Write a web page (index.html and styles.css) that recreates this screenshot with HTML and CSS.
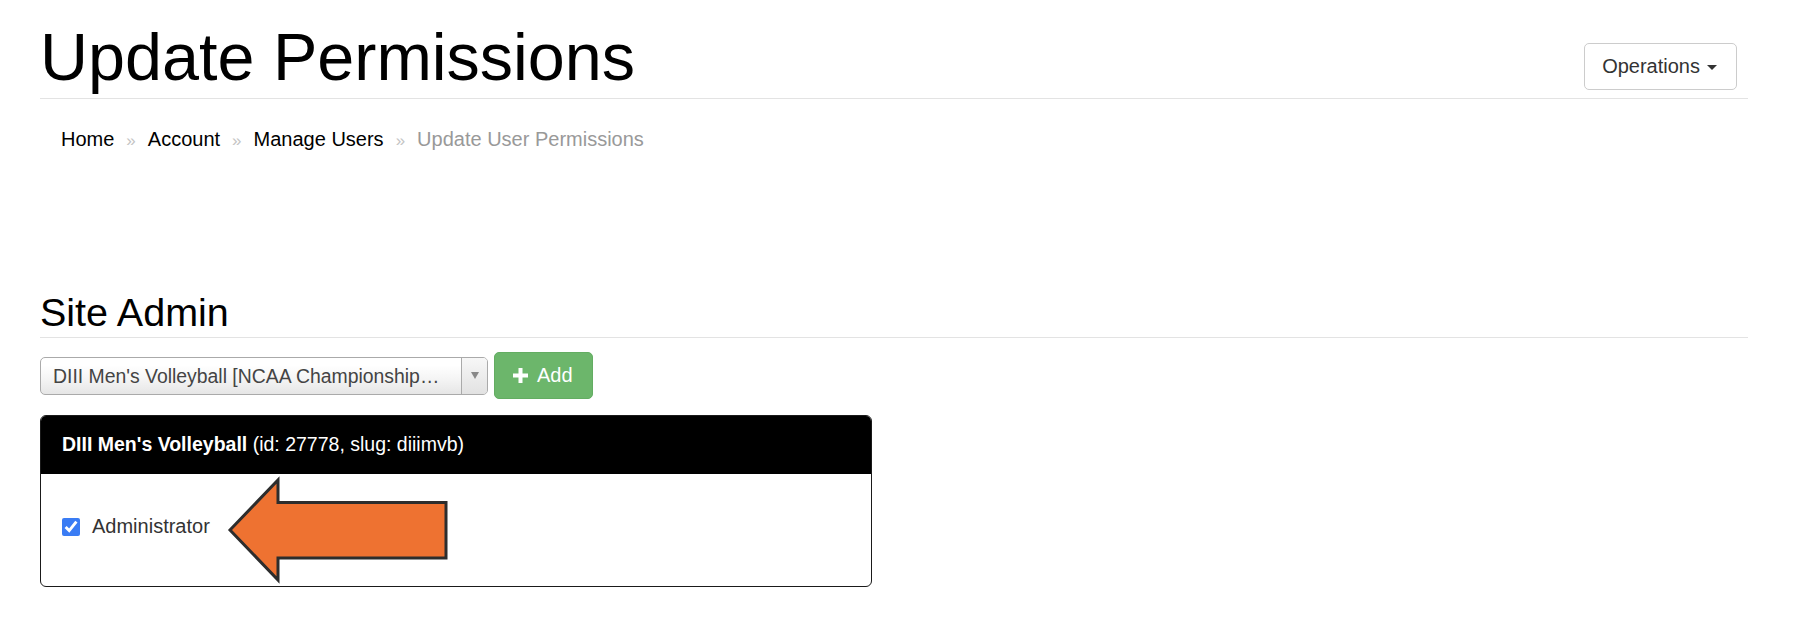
FILE: index.html
```html
<!DOCTYPE html>
<html>
<head>
<meta charset="utf-8">
<title>Update Permissions</title>
<link rel="stylesheet" href="styles.css">
</head>
<body>
<div class="container">
  <div class="page-header">
    <h1 class="title">Update Permissions</h1>
    <button class="ops-btn" type="button">Operations <span class="caret"></span></button>
  </div>
  <ul class="breadcrumb">
    <li><a href="#">Home</a></li>
    <li><a href="#">Account</a></li>
    <li><a href="#">Manage Users</a></li>
    <li class="active">Update User Permissions</li>
  </ul>

  <h2 class="section-title">Site Admin</h2>
  <div class="add-row">
    <div class="select">
      <span class="select-text">DIII Men's Volleyball [NCAA Championship…</span>
      <span class="select-arrow"><span class="tri"></span></span>
    </div>
    <button class="add-btn" type="button">
      <svg class="plus" width="15" height="15" viewBox="0 0 15 15"><rect x="5.5" y="0" width="4" height="15" fill="#fff"/><rect x="0" y="5.5" width="15" height="4" fill="#fff"/></svg>
      <span>Add</span>
    </button>
  </div>

  <div class="card">
    <div class="card-header"><strong>DIII Men's Volleyball</strong> (id: 27778, slug: diiimvb)</div>
    <div class="card-body">
      <label class="check"><input type="checkbox" checked> <span>Administrator</span></label>
    </div>
    <svg class="arrow" width="225" height="108" viewBox="0 0 225 108">
      <polygon points="4,54 52,4 52,26.5 220,26.5 220,82 52,82 52,104" fill="#ee7231" stroke="#2d2d2d" stroke-width="3" stroke-linejoin="miter"/>
    </svg>
  </div>
</div>
</body>
</html>
```

FILE: styles.css
```css
* { box-sizing: border-box; }
html, body { margin: 0; padding: 0; background: #fff; }
body {
  font-family: "Liberation Sans", Arial, Helvetica, sans-serif;
  font-size: 20px;
  line-height: 27px;
  color: #333;
}
.container {
  width: 1708px;
  margin-left: 40px;
}
.page-header {
  display: flex;
  justify-content: space-between;
  align-items: flex-start;
  padding-top: 21px;
  padding-bottom: 4px;
  border-bottom: 1px solid #e3e3e3;
}
.title {
  margin: 0;
  font-size: 66.5px;
  line-height: 73px;
  font-weight: normal;
  color: #000;
}
.ops-btn {
  margin-top: 22px;
  margin-right: 11px;
  font-family: inherit;
  font-size: 20px;
  line-height: 27px;
  color: #333;
  background: #fff;
  border: 1px solid #ccc;
  border-radius: 5px;
  padding: 9px 19px 9px 17px;
  display: flex;
  align-items: center;
  gap: 7px;
}
.caret {
  display: inline-block;
  width: 0;
  height: 0;
  border-left: 5px solid transparent;
  border-right: 5px solid transparent;
  border-top: 5px solid #333;
  margin-top: 2px;
}
.breadcrumb {
  list-style: none;
  margin: 0;
  padding: 27px 21px 0;
  display: flex;
}
.breadcrumb li { color: #000; }
.breadcrumb li + li::before {
  content: "\00bb";
  font-size: 17px;
  color: #c4c4c4;
  padding: 0 12px;
}
.breadcrumb a { color: #000; text-decoration: none; }
.breadcrumb .active { color: #999; }
.section-title {
  margin: 137px 0 0;
  font-size: 39.5px;
  line-height: 42px;
  font-weight: normal;
  color: #000;
  padding-bottom: 4px;
  border-bottom: 1px solid #e3e3e3;
}
.add-row {
  margin-top: 14px;
  display: flex;
  align-items: center;
  gap: 6px;
}
.select {
  width: 448px;
  height: 38px;
  display: flex;
  border: 1px solid #aaa;
  border-radius: 5px;
  background: linear-gradient(#ffffff 20%, #f4f4f4 60%, #e6e6e6 100%);
  overflow: hidden;
}
.select-text {
  flex: 1;
  padding-left: 12px;
  font-size: 19.4px;
  line-height: 36px;
  color: #444;
  white-space: nowrap;
  overflow: hidden;
}
.select-arrow {
  width: 26px;
  border-left: 1px solid #aaa;
  background: linear-gradient(#f7f7f7, #e2e2e2);
  display: flex;
  align-items: center;
  justify-content: center;
}
.tri {
  width: 0;
  height: 0;
  border-left: 4px solid transparent;
  border-right: 4px solid transparent;
  border-top: 7px solid #888;
}
.add-btn {
  font-family: inherit;
  font-size: 20px;
  line-height: 27px;
  color: #fff;
  background: #6cb66b;
  border: 1px solid #63ad62;
  border-radius: 5px;
  padding: 9px 19px 9px 18px;
  display: flex;
  align-items: center;
  gap: 9px;
}
.card {
  position: relative;
  margin-top: 16px;
  width: 832px;
  border: 1px solid #1a1a1a;
  border-radius: 6px;
}
.card-header {
  background: #000;
  color: #fff;
  font-size: 19.5px;
  padding: 15px 21px 16px;
  border-radius: 5px 5px 0 0;
}
.card-header strong { font-weight: bold; }
.card-body {
  padding: 39px 21px 46px;
}
.check {
  display: flex;
  align-items: center;
  gap: 12px;
  color: #333;
}
.check input {
  margin: 0;
  width: 18px;
  height: 18px;
  accent-color: #3a7cf4;
}
.arrow {
  position: absolute;
  left: 185px;
  top: 60px;
}
```
